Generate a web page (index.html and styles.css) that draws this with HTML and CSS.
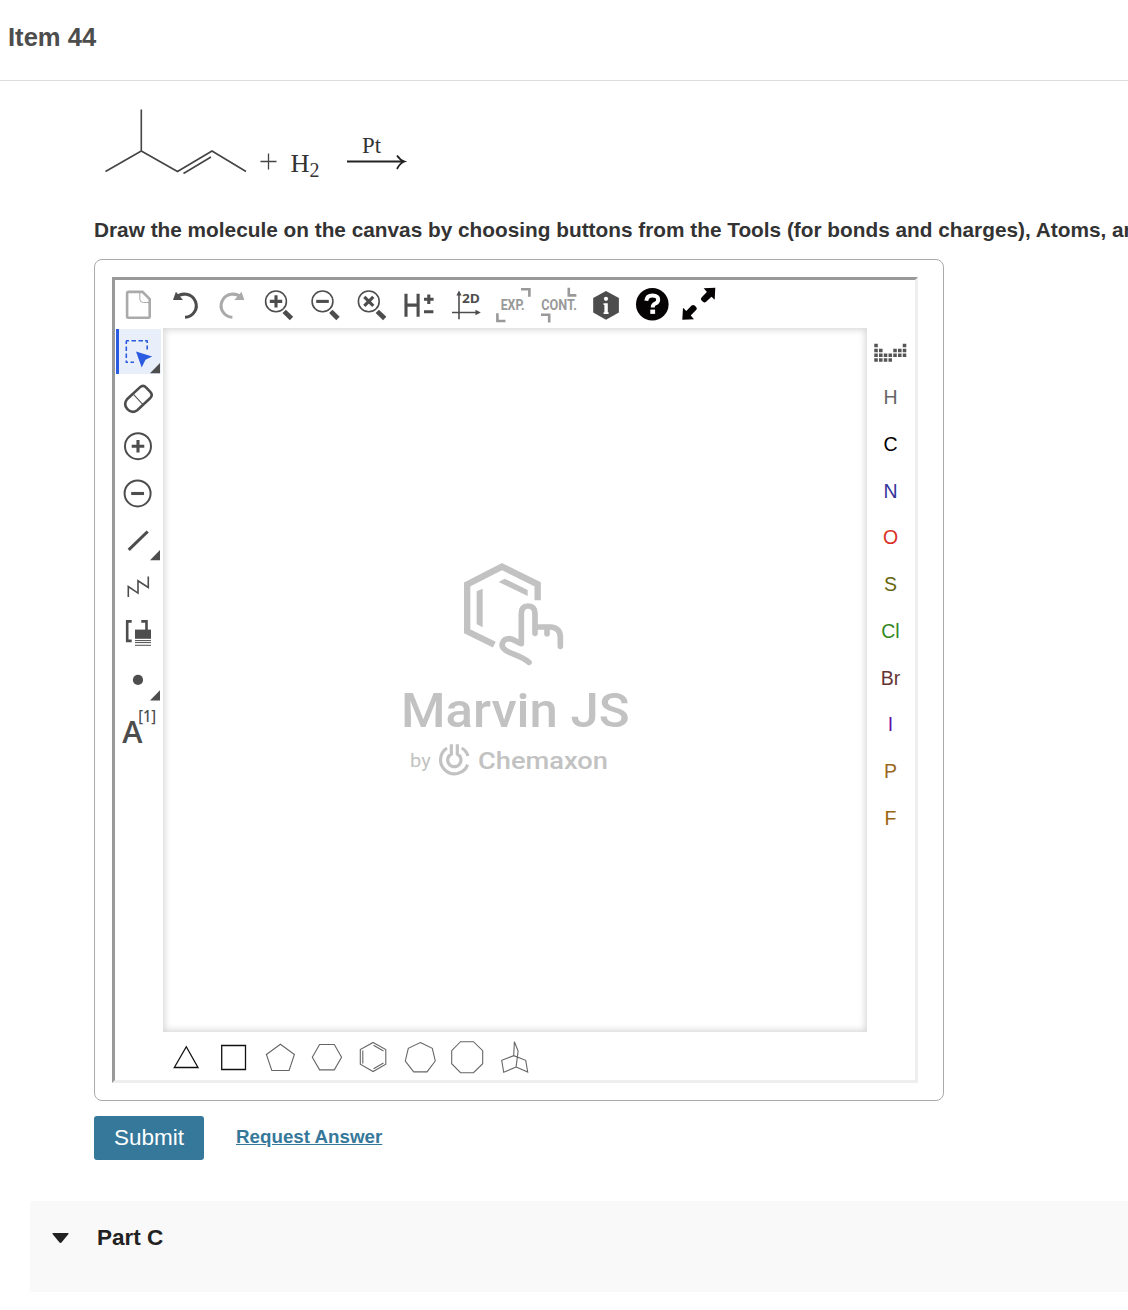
FILE: index.html
```html
<!DOCTYPE html>
<html lang="en">
<head>
    <meta charset="UTF-8">
    <meta name="viewport" content="width=device-width, initial-scale=1.0">
    <title>Item 44</title>
    <link rel="stylesheet" href="styles.css">
</head>
<body>
    <header class="item-header">
        <h1>Item 44</h1>
    </header>

    <main class="question">
        <svg class="reaction" width="330" height="90" viewBox="94 100 330 90">
            <g class="bonds">
                <path d="M105.5 171.5L141.3 151V109.5M141.3 151L177.5 171.5L212 151L246 171.5M183.5 173.5L211 157"/>
            </g>
            <path class="arrow" d="M347 161.5H404M397 155.5Q400 160 404.5 161.5Q400 163 397 169"/>
            <path class="plus" d="M260.5 161.5H276.5M268.5 153.5V169.5"/>
            <text x="290.5" y="172" font-size="25" textLength="19" lengthAdjust="spacingAndGlyphs">H</text>
            <text x="309.5" y="177" font-size="20">2</text>
            <text x="362" y="153" font-size="24" textLength="19" lengthAdjust="spacingAndGlyphs">Pt</text>
        </svg>

        <p class="prompt">Draw the molecule on the canvas by choosing buttons from the Tools (for bonds and charges), Atoms, and Advanced Template toolbars.</p>

        <div class="frame">
            <div class="editor">
                <div class="toolbar top">
                    <svg class="tool disabled" viewBox="0 0 46.7 46.7"><path class="line w25" d="M13.5 10.9H27.5L34.7 18V35.5Q34.7 36.7 33.5 36.7H13.3Q12.1 36.7 12.1 35.5V12.2Q12.1 10.9 13.5 10.9Z"/><path class="line" d="M24.8 11V18Q24.8 21.5 28.3 21.5H35"/></svg>
                    <svg class="tool" viewBox="0 0 46.7 46.7"><path class="line w3" d="M23 36.3A11.6 11.6 0 1 0 14 17"/><path d="M13.9 10.7L11 19H21Z"/></svg>
                    <svg class="tool disabled" viewBox="0 0 46.7 46.7"><path class="line w3" d="M24.4 36.3A11.6 11.6 0 1 1 33.4 17"/><path d="M33.5 10.7L36.4 19H26.4Z"/></svg>
                    <svg class="tool" viewBox="0 0 46.7 46.7"><circle class="line w15" cx="21" cy="20.4" r="10.4"/><path class="line w3" d="M14.8 20.4H27.2M21 14.2V26.6"/><path class="line w45" d="M29.2 30.4L36.5 37.5"/></svg>
                    <svg class="tool" viewBox="0 0 46.7 46.7"><circle class="line w15" cx="20.5" cy="20.4" r="10.4"/><path class="line w3" d="M14.2 20.4H26.8"/><path class="line w45" d="M28.8 30.4L36 37.5"/></svg>
                    <svg class="tool" viewBox="0 0 46.7 46.7"><circle class="line w15" cx="20.8" cy="20.4" r="10.4"/><path class="line w3" d="M16.3 15.9L25.3 24.9M25.3 15.9L16.3 24.9"/><path class="line w45" d="M29.3 30.4L36.7 37.5"/></svg>
                    <svg class="tool" viewBox="0 0 46.7 46.7"><path class="line w3" d="M11 12.8V35.7M23.1 12.8V35.7M11 24.1H23.1M29 18.3H38.6M33.8 13.6V23M29 30.8H38.4"/></svg>
                    <svg class="tool" viewBox="0 0 46.7 46.7"><path class="line w15" d="M17 12V38.3M10 31.5H36"/><path d="M17 9.5L19.6 14.5H14.4ZM38.8 31.5L33.5 34.2V28.8Z"/><text class="dim" x="20" y="21.7" textLength="18" lengthAdjust="spacingAndGlyphs">2D</text></svg>
                    <svg class="tool faded" viewBox="0 0 46.7 46.7"><text class="caps" x="11.7" y="29.2" textLength="24" lengthAdjust="spacingAndGlyphs">EXP.</text><path class="line w25" d="M32 8.2H40.4V15.7M8.4 32.3V40H16.5"/></svg>
                    <svg class="tool faded" viewBox="0 0 46.7 46.7"><text class="caps" x="6.3" y="29.2" textLength="35.7" lengthAdjust="spacingAndGlyphs">CONT.</text><path class="line w25" d="M33.8 6.7V14.4H41.4M6 33.8H14.2V41.4"/></svg>
                    <svg class="tool" viewBox="0 0 46.7 46.7"><path d="M24 10L36.9 17V31.5L24 38.7L11.2 31.5V17Z"/><circle class="white" cx="24" cy="17.8" r="2.1"/><path class="white" d="M21.5 22.3H25.8V31.3H26.6V33H21.6V31.3H22.4V24H21.5Z"/></svg>
                    <svg class="tool black" viewBox="0 0 46.7 46.7"><circle cx="23.3" cy="23.2" r="16.3"/><path class="mark" d="M17.3 19.7Q17.8 14.5 23.5 14.5Q29.2 14.6 29.2 18.8Q29 21.3 26.3 22.5Q23.7 23.7 23.7 26.5"/><rect class="white" x="21.3" y="28.6" width="4.8" height="4.3"/></svg>
                    <svg class="tool black" viewBox="0 0 46.7 46.7"><path d="M28.7 7.3L40.3 6.8L39.7 18.8L36.5 15.7L31.1 20.8Q29.5 22.2 28 20.8L26.4 19.2Q25.2 17.8 26.7 16.3L31.9 11.1ZM19 38.2L7.3 38.7L8 26.7L11.3 29.9L16.6 24.6Q18.2 23.2 19.7 24.6L21.3 26.3Q22.6 27.7 21.1 29.1L15.7 34.5Z"/></svg>
                </div>

                <div class="toolbar left">
                    <svg class="tool selected" viewBox="0 0 46.7 46.9"><rect class="tile" x="1" y="1" width="45" height="45"/><rect class="bar" x="1" y="1" width="3" height="45"/><path class="dashes" d="M11 12.8H14M16.5 12.8H21M23.5 12.8H28M30 12.8H32.8M32.2 13V15M32.2 17.5V21.5M11.3 13V16M11.3 18.5V23M11.3 25.5V30M11.3 32.5V34.8M11 34.2H13M15.5 34.2H19"/><path class="pointer" d="M21 23.5L37.2 28.6L30.5 31.8L26.7 39.5Z"/><path class="corner" d="M35 45.3L45 35V45.3Z"/></svg>
                    <svg class="tool" viewBox="0 0 46.7 46.9"><g transform="translate(23 24.3) rotate(-43)"><path class="line w25" d="M-8 -7.5H9.5Q14 -7.5 14 -3V3Q14 7.5 9.5 7.5H-8Q-14.5 6.5 -14.5 0Q-14.5 -6.5 -8 -7.5Z"/><path class="line" d="M0 -7V7"/></g></svg>
                    <svg class="tool" viewBox="0 0 46.7 46.9"><circle class="line w2" cx="23" cy="24.2" r="13"/><path class="line w3" d="M16.7 24.2H29.3M23 17.9V30.5"/></svg>
                    <svg class="tool" viewBox="0 0 46.7 46.9"><circle class="line w2" cx="22.6" cy="24.4" r="13"/><path class="line w3" d="M16.2 24.5H29"/></svg>
                    <svg class="tool" viewBox="0 0 46.7 46.9"><path class="line w3" d="M13.7 33.9L32.7 15.5"/><path d="M35 44.3L45 34V44.3Z"/></svg>
                    <svg class="tool" viewBox="0 0 46.7 46.9"><path class="line w15" d="M13.3 35.1V24.5L23 31.1V18.8L33.3 25.5V14.5"/></svg>
                    <svg class="tool" viewBox="0 0 46.7 46.9"><path class="line w25" d="M16.7 12.4H12.2V31.9H16.7M26.3 12.4H31.5V21"/><path d="M20 20.6H36V29.8H20Z"/><path class="line" d="M20 31.6H36M20 33.6H36M20 36.3H36"/></svg>
                    <svg class="tool" viewBox="0 0 46.7 46.9"><circle cx="23" cy="23.9" r="5.1"/><path d="M35 44.6L45 34.3V44.6Z"/></svg>
                    <svg class="tool" viewBox="0 0 46.7 46.9"><text class="label-a" x="7.2" y="40.2" textLength="20.2" lengthAdjust="spacingAndGlyphs">A</text><text class="label-n" x="23.2" y="19" textLength="18" lengthAdjust="spacingAndGlyphs">[1]</text></svg>
                </div>

                <div class="canvas">
                    <svg class="logo" width="260" height="260" viewBox="-15 0 780 780">
                        <path class="hexagon" d="M443 151V103L336 50L231.5 103V244L313 284"/>
                        <path d="M260 124L278 116V232L260 223ZM326 96L344 86L413 120V138Z"/>
                        <path class="hand" d="M417 337C395 318 362 312 347 301C328 288 337 266 359 266C374 267 382 279 394 281V191Q394 168 414 168Q435 168 435 191V250M435 231H483Q511 234 511 262V289M471 231V251"/>
                        <text class="brand" x="33" y="530" textLength="686" lengthAdjust="spacingAndGlyphs">Marvin JS</text>
                        <text class="by" x="60" y="651" textLength="62" lengthAdjust="spacingAndGlyphs">by</text>
                        <path class="mark" d="M171 594A42 42 0 1 0 233 644M215 594A42 42 0 0 1 234 618M184 583V612A20 20 0 1 0 202 612V583"/>
                        <text class="company" x="264" y="656" textLength="390" lengthAdjust="spacingAndGlyphs">Chemaxon</text>
                    </svg>
                </div>

                <div class="toolbar right">
                    <svg class="tool" viewBox="0 0 46.7 46.8"><path class="dots" d="M7 17.9H11M35.98 17.9H40M7 22.8H16M26.32 22.8H40M7 27.7H40M7 32.6H25"/></svg>
                    <span class="atom h">H</span>
                    <span class="atom c">C</span>
                    <span class="atom n">N</span>
                    <span class="atom o">O</span>
                    <span class="atom s">S</span>
                    <span class="atom cl">Cl</span>
                    <span class="atom br">Br</span>
                    <span class="atom i">I</span>
                    <span class="atom p">P</span>
                    <span class="atom f">F</span>
                </div>

                <div class="toolbar bottom">
                    <svg class="ring dark" viewBox="0 0 46.8 46.8"><path d="M23.3 14.7L35 35.5H11.3Z"/></svg>
                    <svg class="ring dark" viewBox="0 0 46.8 46.8"><path d="M11.7 13.5H35.5V37.5H11.7Z"/></svg>
                    <svg class="ring" viewBox="0 0 46.8 46.8"><path d="M23.4 12.2L37.4 22.5L32.1 38.5H14.8L9.4 22.5Z"/></svg>
                    <svg class="ring" viewBox="0 0 46.8 46.8"><path d="M16.6 12.5H31.3L38.6 25.3L31.3 37.9H16.6L9.3 25.3Z"/></svg>
                    <svg class="ring" viewBox="0 0 46.8 46.8"><path d="M23.1 10.5L35.8 17.5V32.3L23.1 39.5L10.3 32.3V17.5ZM12.8 18.5V31.5M23.5 13.3L33.5 18.9M23.5 36.8L33.5 31"/></svg>
                    <svg class="ring" viewBox="0 0 46.8 46.8"><path d="M23.3 10.5L35.3 16.3L38.3 29L30 39.9H16.7L8.3 29L11.3 16.3Z"/></svg>
                    <svg class="ring" viewBox="0 0 46.8 46.8"><path d="M16.5 9.7H29.5L38.7 18.7V31.7L29.5 40.7H16.5L7.7 31.7V18.7Z"/></svg>
                    <svg class="ring" viewBox="0 0 46.8 46.8"><path d="M22.7 23.7L23.4 9.7L27.1 19L25.1 35L36.7 40L34.7 28.3L22.7 23.7L10.7 28.3L12.7 40.3L25.1 35"/></svg>
                </div>
            </div>
        </div>

        <div class="actions">
            <button class="submit">Submit</button>
            <a class="request" href="#">Request Answer</a>
        </div>
    </main>

    <section class="part">
        <svg width="18" height="11" viewBox="0 0 18 11"><path d="M1 0H16Q17 0.3 16.5 1L9.5 9.5Q8.5 10.3 7.5 9.5L0.5 1Q0 0.3 1 0Z"/></svg>
        <h2>Part C</h2>
    </section>
</body>
</html>
```
FILE: styles.css
```css
body {
    margin: 0;
    background: #fff;
    color: #333;
    font-family: "Liberation Sans", Arial, sans-serif;
    overflow: hidden;
}

.item-header {
    height: 80px;
    border-bottom: 1px solid #ddd;
    padding-left: 8px;
}

.item-header h1 {
    margin: 0;
    font-size: 25.6px;
    line-height: 74px;
    color: #4d4d4d;
}

.question {
    padding: 19px 0 0 94px;
}

.reaction {
    display: block;
    font-family: "Liberation Serif", "Times New Roman", serif;
    fill: #333;
}

.reaction path {
    fill: none;
    stroke: #444;
    stroke-width: 1.6;
}

.reaction .arrow {
    stroke: #222;
    stroke-width: 1.8;
}

.reaction .plus {
    stroke-width: 1.3;
}

.prompt {
    margin: 28px 0 17px;
    font-size: 20.8px;
    line-height: 24px;
    font-weight: bold;
    white-space: nowrap;
}

.frame {
    width: 850px;
    height: 842px;
    box-sizing: border-box;
    padding: 17px;
    border: 1px solid #aaa;
    border-radius: 8px;
}

.editor {
    display: grid;
    grid-template-columns: 48px 704px 48px;
    grid-template-rows: 48px 704px 48px;
    grid-template-areas:
        "top top top"
        "left canvas right"
        "bottom bottom bottom";
    width: 800px;
    border: 3px solid;
    border-color: #999 #eee #eee #999;
}

/* toolbars */
.toolbar {
    display: flex;
}

.top {
    grid-area: top;
    padding-top: 1px;
}

.left {
    grid-area: left;
    flex-direction: column;
}

.right {
    grid-area: right;
    flex-direction: column;
}

.bottom {
    grid-area: bottom;
    padding-left: 48px;
}

.tool {
    flex: none;
    width: 46.7px;
    height: 46.7px;
    fill: #4d4d4d;
    stroke: none;
    color: #4d4d4d;
}

.left .tool {
    height: 46.9px;
}

.right .tool {
    height: 46px;
}

.tool.disabled {
    fill: #aaa;
    color: #aaa;
}

.tool.faded {
    fill: #999;
    color: #999;
}

.tool.black {
    fill: #050303;
}

.tool .line {
    fill: none;
    stroke: currentColor;
    stroke-width: 1;
}

.tool .w15 { stroke-width: 1.6; }
.tool .w2 { stroke-width: 2; }
.tool .w25 { stroke-width: 2.6; }
.tool .w3 { stroke-width: 3.1; }
.tool .w45 { stroke-width: 4.8; }

.tool .white {
    fill: #fff;
}

.tool .mark {
    fill: none;
    stroke: #fff;
    stroke-width: 4;
}

.tool .dots {
    fill: none;
    stroke: #555;
    stroke-width: 3.6;
    stroke-dasharray: 3.6 1.23;
}

.dim {
    font: bold 12px "Open Sans", sans-serif;
}

.caps {
    font: bold 14.5px Roboto, sans-serif;
}

.label-a {
    font: 600 30.5px "Open Sans", sans-serif;
}

.label-n {
    font: 500 15.5px "Noto Sans", sans-serif;
}

.selected .tile {
    fill: #e8eefa;
}

.selected .bar,
.selected .pointer {
    fill: #2b5be0;
}

.selected .dashes {
    fill: none;
    stroke: #2b5be0;
    stroke-width: 1.6;
}

.atom {
    height: 46.78px;
    width: 47px;
    font-size: 19.5px;
    line-height: 46px;
    text-align: center;
}

.h { color: #666; }
.c { color: #000; }
.n { color: #333399; }
.o { color: #d93025; }
.s { color: #666611; }
.cl { color: #338822; }
.br { color: #663333; }
.i { color: #6611aa; }
.p { color: #996622; }
.f { color: #996611; }

.ring {
    flex: none;
    width: 46.8px;
    height: 46.8px;
    fill: none;
    stroke: #666;
    stroke-width: 1.1;
}

.ring.dark {
    stroke: #111;
    stroke-width: 1.3;
}

/* drawing area */
.canvas {
    grid-area: canvas;
    display: flex;
    justify-content: center;
    align-items: center;
    box-shadow: inset 0 0 6px 2px #d8d8d8;
}

.logo {
    fill: #c2c2c2;
}

.logo .hexagon,
.logo .hand,
.logo .mark {
    fill: none;
    stroke: #c2c2c2;
}

.logo .hexagon {
    stroke-width: 19;
}

.logo .hand {
    stroke-width: 17;
    stroke-linecap: round;
    stroke-linejoin: round;
}

.logo .mark {
    stroke-width: 9.5;
}

.brand {
    font: 500 142px Roboto, sans-serif;
}

.by {
    font: 56px Roboto, sans-serif;
}

.company {
    font: 500 74px Roboto, sans-serif;
}

/* buttons under the editor */
.actions {
    display: flex;
    align-items: center;
    gap: 32px;
    margin-top: 15px;
}

.submit {
    width: 110px;
    height: 44px;
    padding: 0;
    border: none;
    border-radius: 3px;
    background: #36789a;
    color: #fff;
    font-family: inherit;
    font-size: 22.5px;
}

.request {
    margin-top: -3px;
    color: #36789a;
    font-size: 18.75px;
    font-weight: bold;
}

.part {
    display: flex;
    align-items: center;
    gap: 27px;
    height: 91px;
    box-sizing: border-box;
    margin: 41px 0 0 30px;
    padding: 0 0 17px 22px;
    background: #f9f9f9;
    fill: #222;
}

.part h2 {
    margin: 0;
    font-size: 22.5px;
    color: #222;
}
```
